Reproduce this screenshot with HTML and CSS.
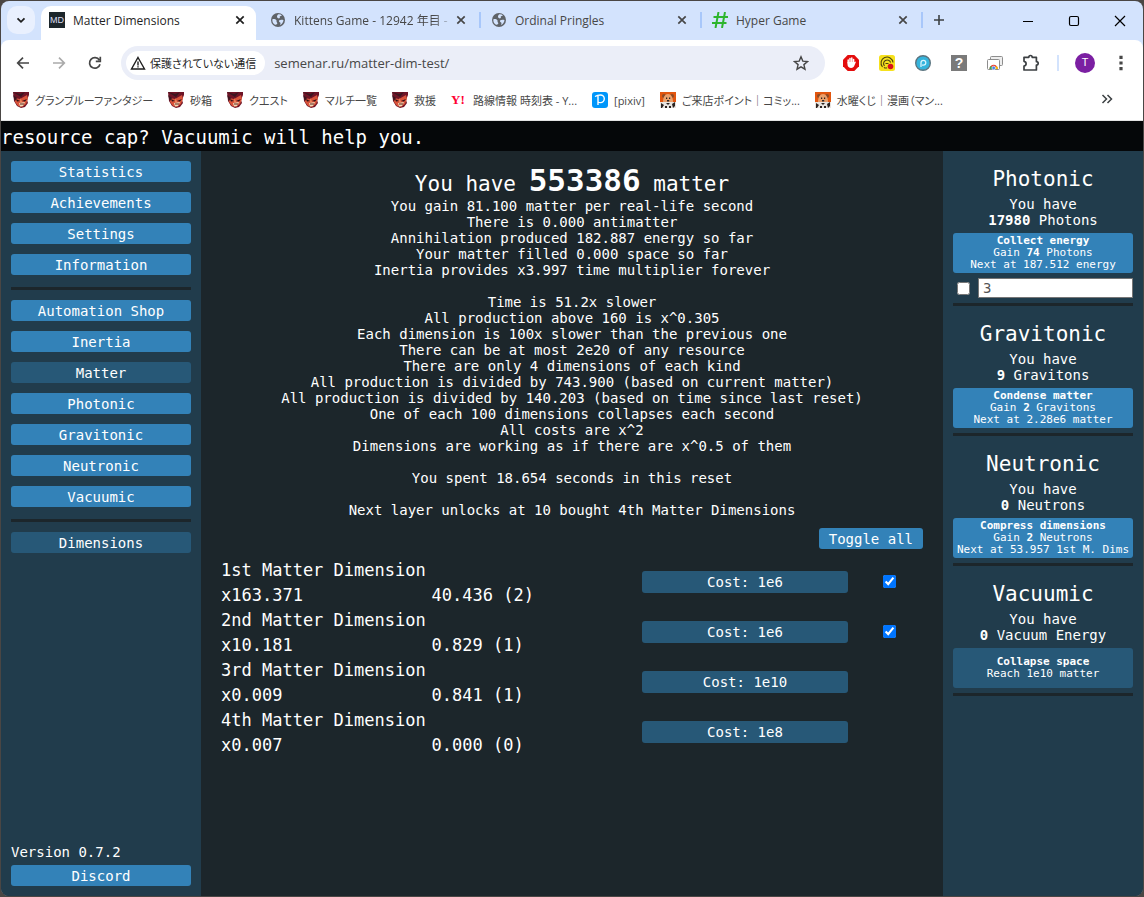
FILE: index.html
```html
<!DOCTYPE html>
<html lang="en">
<head>
    <meta charset="UTF-8">
    <meta name="viewport" content="width=device-width, initial-scale=1.0">
    <title>Matter Dimensions</title>
    <link rel="stylesheet" href="styles.css">
</head>
<body>
    <!-- Icons used more than once -->
    <svg class="icon-defs" aria-hidden="true">
        <symbol id="icon-close" viewBox="0 0 16 16">
            <path d="M4.3 4.3l7.4 7.4M11.7 4.3l-7.4 7.4" fill="none" stroke="currentColor" stroke-width="1.7"/>
        </symbol>
        <symbol id="icon-globe" viewBox="0 0 16 16">
            <circle cx="8" cy="8" r="7" fill="#5f6368"/>
            <path d="M2.4 7.2c1.8-.3 3.4.1 4 1 .5.8-.2 1.400.4 2 .5.500.8 1 .2 1.800-.5.6-1.200.9-2 .7-2-1-3-3.100-2.600-5.500zM8 2.400c1.500-.3 3 .1 4 1-.8.600-1.800.5-2.200 1.100-.4.7.600 1-.1 1.600-.8.6-2 .2-2.500-.5C6.800 4.700 7 3 8 2.400zM9 8.400c1-.8 2.900-.8 4.500-.4-.1 2.200-1.500 4.300-3.500 5.100.3-1 .8-1.700.2-2.500-.5-.6-1.800-1.400-1.200-2.200z" fill="#d3e3fd"/>
        </symbol>
        <symbol id="icon-face" viewBox="0 0 16 16">
            <path d="M0 0h16v3l-2 5 1 3-3 4-4 1-4-2-3-5z" fill="#6e1426"/>
            <path d="M2 6l5 1 7-4 1 4-2 5-4 3-4-1-3-4z" fill="#d9533a"/>
            <path d="M0 0l7 2 5-2-4 5zM0 3l4 3-2 3z" fill="#3c1620"/>
            <path d="M3 7l4 2-3 .6zM9 9l5-2-2 2.600z" fill="#2c1018"/>
            <path d="M6 11l6-1-2 4-3 .6z" fill="#f2d9b8"/>
            <path d="M7 12h4" stroke="#5a2018" stroke-width="1"/>
            <path d="M7.500 6l1.500 4-2 .5z" fill="#f08a5e"/>
        </symbol>
        <symbol id="icon-bear" viewBox="0 0 16 16">
            <path d="M0 0h16v10H0z" fill="#e2560f"/>
            <circle cx="4" cy="4" r="2" fill="#8a4a26"/>
            <circle cx="12" cy="4" r="2" fill="#8a4a26"/>
            <path d="M3 10c0-5 2-8 5-8s5 3 5 8z" fill="#e9a06c"/>
            <path d="M0 10h16v6H0z" fill="#e8e4e0"/>
            <path d="M6 5.500h1.200v1.500H6zM9 5.500h1.200v1.500H9zM7 8h2.200v1.500H7zM1 11l3 2-2 3H1zM6 11h4l-2 2zM12 12l3-2v4l-2 2zM5 14h2v2H5zM9 14h2v2H9z" fill="#2b2320"/>
        </symbol>
    </svg>

    <div class="window">
        <div class="tab-strip">
            <button class="tab-search" aria-label="Search tabs">
                <svg width="16" height="16" viewBox="0 0 16 16"><path d="M4.500 6.300L8 9.800l3.500-3.500" fill="none" stroke="#1f1f1f" stroke-width="1.800"/></svg>
            </button>
            <div class="tabs">
                <div class="tab tab-active">
                    <span class="favicon md-logo">MD</span>
                    <span class="tab-title">Matter Dimensions</span>
                    <button class="tab-close" aria-label="Close tab"><svg><use href="#icon-close"/></svg></button>
                </div>
                <div class="tab">
                    <svg class="favicon"><use href="#icon-globe"/></svg>
                    <span class="tab-title tab-title-fade">Kittens Game - 12942 年目 -</span>
                    <button class="tab-close" aria-label="Close tab"><svg><use href="#icon-close"/></svg></button>
                </div>
                <div class="tab tab-divided">
                    <svg class="favicon"><use href="#icon-globe"/></svg>
                    <span class="tab-title">Ordinal Pringles</span>
                    <button class="tab-close" aria-label="Close tab"><svg><use href="#icon-close"/></svg></button>
                </div>
                <div class="tab tab-divided">
                    <svg class="favicon" viewBox="0 0 16 16"><path d="M6.500 0L3.500 16M13 0l-3 16M1.500 5H16M0 11h14.500" fill="none" stroke="#2db52d" stroke-width="2"/></svg>
                    <span class="tab-title">Hyper Game</span>
                    <button class="tab-close" aria-label="Close tab"><svg><use href="#icon-close"/></svg></button>
                </div>
                <button class="new-tab tab-divided" aria-label="New tab">
                    <svg width="14" height="14" viewBox="0 0 14 14"><path d="M7 2v10M2 7h10" stroke="#3c4043" stroke-width="1.600"/></svg>
                </button>
            </div>
            <div class="window-controls">
                <button aria-label="Minimize"><svg width="12" height="12" viewBox="0 0 12 12"><path d="M1 6.500h10" stroke="#000"/></svg></button>
                <button aria-label="Maximize"><svg width="12" height="12" viewBox="0 0 12 12"><rect x="1.500" y="1.500" width="9" height="9" rx="1.500" fill="none" stroke="#000" stroke-width="1.200"/></svg></button>
                <button aria-label="Close"><svg width="12" height="12" viewBox="0 0 12 12"><path d="M1 1l10 10M11 1L1 11" stroke="#000" stroke-width="1.200"/></svg></button>
            </div>
        </div>

        <div class="toolbar">
            <button class="tool" aria-label="Back"><svg width="16" height="16" viewBox="0 0 16 16"><path d="M14 8H3M8 2.700L2.700 8 8 13.300" fill="none" stroke="#474747" stroke-width="1.700"/></svg></button>
            <button class="tool" aria-label="Forward" disabled><svg width="16" height="16" viewBox="0 0 16 16"><path d="M2 8h11M8 2.700L13.300 8 8 13.300" fill="none" stroke="#aaa" stroke-width="1.700"/></svg></button>
            <button class="tool" aria-label="Reload"><svg width="16" height="16" viewBox="0 0 16 16"><path d="M13 9.200A5.300 5.300 0 1 1 12.300 5M13.300 1.800v4.500H8.800" fill="none" stroke="#474747" stroke-width="1.700"/></svg></button>
            <div class="address-bar">
                <button class="security">
                    <svg width="16" height="14" viewBox="0 0 16 14"><path d="M8 1.500L14.500 13h-13z" fill="none" stroke="#1f1f1f" stroke-width="1.400"/><path d="M8 5.500v4M8 10.300v1.300" stroke="#1f1f1f" stroke-width="1.400"/></svg>
                    <span>保護されていない通信</span>
                </button>
                <input class="address" type="text" value="semenar.ru/matter-dim-test/" aria-label="Address">
                <button class="star" aria-label="Bookmark this page"><svg width="16" height="16" viewBox="0 0 16 16"><path d="M8 1.800l1.800 4.300 4.700.4-3.600 3.100 1.100 4.600L8 11.800l-4 2.400 1.100-4.600-3.600-3.100 4.700-.4z" fill="none" stroke="#474747" stroke-width="1.400"/></svg></button>
            </div>
            <div class="extensions">
                <button class="tool" aria-label="Ad blocker"><svg width="16" height="16" viewBox="0 0 16 16"><path d="M4.700 0h6.600L16 4.700v6.600L11.300 16H4.700L0 11.300V4.700z" fill="#e40d0d"/><path d="M5.200 8V5M7 8V3.500M8.800 8V3M10.600 8V4.500" stroke="#fff" stroke-width="1.500" stroke-linecap="round"/><path d="M4.500 7h6.800l1-.6.6.7-1.800 4.200C10.400 12.600 9.500 13 8.200 13 6 13 4.500 11.800 4.500 9.500z" fill="#fff"/></svg></button>
                <button class="tool" aria-label="Recorder"><svg width="16" height="16" viewBox="0 0 16 16"><rect width="16" height="16" rx="2.500" fill="#f6e11d"/><path d="M3.500 12A6 6 0 1 1 14 7.500M5.500 11A3.600 3.600 0 1 1 11.600 7.500M8 12.800c-1 .4-2.300.2-3-.5" fill="none" stroke="#4a4210" stroke-width="1.100"/><path d="M6.500 8.500h3" stroke="#4a4210"/><circle cx="11.500" cy="11.500" r="2.800" fill="#d8131b"/></svg></button>
                <button class="tool" aria-label="Powerful Pixiv"><svg width="16" height="16" viewBox="0 0 16 16"><circle cx="8" cy="8" r="7.300" fill="#35b4dc" stroke="#5c7580" stroke-width="1.400"/><path d="M6 12V7.800a2.400 2.400 0 1 1 2.400 2.400H7" fill="none" stroke="#d8f4fd" stroke-width="1.300"/></svg></button>
                <button class="tool" aria-label="Unknown extension"><span class="question">?</span></button>
                <button class="tool" aria-label="Screenshots"><svg width="16" height="16" viewBox="0 0 16 16"><rect x="3.500" y="1.500" width="12" height="9" rx="1" fill="#eee" stroke="#8d8d8d"/><rect x=".5" y="4.500" width="12" height="10" rx="1" fill="#fff" stroke="#8d8d8d"/><path d="M2.500 14a4.200 4.200 0 0 1 8.400 0z" fill="#e84335"/><path d="M2.500 14a4 4 0 0 1 1.200-3L6.700 14z" fill="#34a853"/><path d="M10.900 14a4 4 0 0 0-1.200-3l-3 3z" fill="#fbbc05"/><circle cx="6.700" cy="13" r="1.800" fill="#4285f4" stroke="#fff" stroke-width=".6"/></svg></button>
                <button class="tool" aria-label="Extensions"><svg width="18" height="18" viewBox="0 0 18 18"><path d="M2 3.300h4.800c0-2.400 3.400-2.400 3.400 0h4.200v4.300c2.400 0 2.400 3.400 0 3.400v5H2v-4c2.800-.6 2.800-4.100 0-4.700z" fill="none" stroke="#3c4043" stroke-width="1.700" stroke-linejoin="round"/></svg></button>
            </div>
            <span class="toolbar-divider"></span>
            <button class="tool" aria-label="Profile"><span class="avatar">T</span></button>
            <button class="tool" aria-label="Menu"><svg width="4" height="16" viewBox="0 0 4 16"><path d="M.4.700h3.200v3.200H.4zM.4 6.400h3.200v3.200H.4zM.4 12.100h3.200v3.200H.4z" fill="#474747"/></svg></button>
        </div>

        <nav class="bookmarks" lang="ja">
            <a class="bookmark" href="#"><svg><use href="#icon-face"/></svg>グランブルーファンタジー</a>
            <a class="bookmark" href="#"><svg><use href="#icon-face"/></svg>砂箱</a>
            <a class="bookmark" href="#"><svg><use href="#icon-face"/></svg>クエスト</a>
            <a class="bookmark" href="#"><svg><use href="#icon-face"/></svg>マルチ一覧</a>
            <a class="bookmark" href="#"><svg><use href="#icon-face"/></svg>救援</a>
            <a class="bookmark" href="#"><span class="yahoo">Y!</span>路線情報 時刻表 - Y...</a>
            <a class="bookmark" href="#"><svg viewBox="0 0 16 16"><rect width="16" height="16" rx="3" fill="#0096fa"/><path d="M3 4.500C5 3.300 7 3 8.500 3a3.800 3.800 0 0 1 0 7.600C7.500 10.600 6.500 10.300 6 10M6 4v9" fill="none" stroke="#fff" stroke-width="1.400"/></svg>[pixiv]</a>
            <a class="bookmark" href="#"><svg><use href="#icon-bear"/></svg>ご来店ポイント｜コミッ...</a>
            <a class="bookmark" href="#"><svg><use href="#icon-bear"/></svg>水曜くじ｜漫画（マン...</a>
            <button class="more-bookmarks" aria-label="More bookmarks"><svg width="12" height="12" viewBox="0 0 12 12"><path d="M1.500 2L5.500 6l-4 4M6.500 2l4 4-4 4" fill="none" stroke="#3c4043" stroke-width="1.500"/></svg></button>
        </nav>

        <div class="game">
            <div class="news">resource cap? Vacuumic will help you.</div>

            <div class="columns">
                <nav class="menu">
                    <button class="button">Statistics</button>
                    <button class="button">Achievements</button>
                    <button class="button">Settings</button>
                    <button class="button">Information</button>
                    <hr>
                    <button class="button">Automation Shop</button>
                    <button class="button">Inertia</button>
                    <button class="button button-off">Matter</button>
                    <button class="button">Photonic</button>
                    <button class="button">Gravitonic</button>
                    <button class="button">Neutronic</button>
                    <button class="button">Vacuumic</button>
                    <hr>
                    <button class="button button-off">Dimensions</button>
                    <div class="menu-footer">
                        <p>Version 0.7.2</p>
                        <button class="button">Discord</button>
                    </div>
                </nav>

                <main class="content">
                    <h1>You have <strong>553386</strong> matter</h1>
                    <div class="stats">
                        <p>You gain 81.100 matter per real-life second</p>
                        <p>There is 0.000 antimatter</p>
                        <p>Annihilation produced 182.887 energy so far</p>
                        <p>Your matter filled 0.000 space so far</p>
                        <p>Inertia provides x3.997 time multiplier forever</p>
                    </div>
                    <div class="stats">
                        <p>Time is 51.2x slower</p>
                        <p>All production above 160 is x^0.305</p>
                        <p>Each dimension is 100x slower than the previous one</p>
                        <p>There can be at most 2e20 of any resource</p>
                        <p>There are only 4 dimensions of each kind</p>
                        <p>All production is divided by 743.900 (based on current matter)</p>
                        <p>All production is divided by 140.203 (based on time since last reset)</p>
                        <p>One of each 100 dimensions collapses each second</p>
                        <p>All costs are x^2</p>
                        <p>Dimensions are working as if there are x^0.5 of them</p>
                    </div>
                    <div class="stats">
                        <p>You spent 18.654 seconds in this reset</p>
                    </div>
                    <div class="stats">
                        <p>Next layer unlocks at 10 bought 4th Matter Dimensions</p>
                    </div>

                    <div class="toggle-row">
                        <button class="button">Toggle all</button>
                    </div>

                    <table class="dimensions">
                        <colgroup>
                            <col class="col-wide">
                            <col class="col-wide">
                            <col class="col-wide">
                            <col>
                        </colgroup>
                        <tbody>
                            <tr>
                                <th colspan="2">1st Matter Dimension</th>
                                <td class="cost" rowspan="2"><button class="button button-off">Cost: 1e6</button></td>
                                <td class="auto" rowspan="2"><input type="checkbox" aria-label="Buy 1st Matter Dimension automatically" checked></td>
                            </tr>
                            <tr>
                                <td>x163.371</td>
                                <td>40.436 (2)</td>
                            </tr>
                            <tr>
                                <th colspan="2">2nd Matter Dimension</th>
                                <td class="cost" rowspan="2"><button class="button button-off">Cost: 1e6</button></td>
                                <td class="auto" rowspan="2"><input type="checkbox" aria-label="Buy 2nd Matter Dimension automatically" checked></td>
                            </tr>
                            <tr>
                                <td>x10.181</td>
                                <td>0.829 (1)</td>
                            </tr>
                            <tr>
                                <th colspan="2">3rd Matter Dimension</th>
                                <td class="cost" rowspan="2"><button class="button button-off">Cost: 1e10</button></td>
                                <td rowspan="2"></td>
                            </tr>
                            <tr>
                                <td>x0.009</td>
                                <td>0.841 (1)</td>
                            </tr>
                            <tr>
                                <th colspan="2">4th Matter Dimension</th>
                                <td class="cost" rowspan="2"><button class="button button-off">Cost: 1e8</button></td>
                                <td rowspan="2"></td>
                            </tr>
                            <tr>
                                <td>x0.007</td>
                                <td>0.000 (0)</td>
                            </tr>
                        </tbody>
                    </table>
                </main>

                <aside class="layers">
                    <section class="layer">
                        <h2>Photonic</h2>
                        <p>You have</p>
                        <p><strong>17980</strong> Photons</p>
                        <button class="button reset"><strong>Collect energy</strong><span>Gain <b>74</b> Photons</span><span>Next at 187.512 energy</span></button>
                        <div class="auto-reset">
                            <input type="checkbox" aria-label="Collect energy automatically">
                            <input class="amount" type="text" value="3" aria-label="Photons to collect at">
                        </div>
                        <hr>
                    </section>
                    <section class="layer">
                        <h2>Gravitonic</h2>
                        <p>You have</p>
                        <p><strong>9</strong> Gravitons</p>
                        <button class="button reset"><strong>Condense matter</strong><span>Gain <b>2</b> Gravitons</span><span>Next at 2.28e6 matter</span></button>
                        <hr>
                    </section>
                    <section class="layer">
                        <h2>Neutronic</h2>
                        <p>You have</p>
                        <p><strong>0</strong> Neutrons</p>
                        <button class="button reset"><strong>Compress dimensions</strong><span>Gain <b>2</b> Neutrons</span><span>Next at 53.957 1st M. Dims</span></button>
                        <hr>
                    </section>
                    <section class="layer">
                        <h2>Vacuumic</h2>
                        <p>You have</p>
                        <p><strong>0</strong> Vacuum Energy</p>
                        <button class="button button-off reset"><strong>Collapse space</strong><span>Reach 1e10 matter</span></button>
                        <hr>
                    </section>
                </aside>
            </div>
        </div>
    </div>
</body>
</html>
```
FILE: styles.css
```css
* {
    margin: 0;
    padding: 0;
    box-sizing: border-box;
}
body {
    min-height: 100vh;
    display: flex;
    padding: 1px;
    background-color: #4a4644;
    font-family: "Open Sans", "Noto Sans CJK JP", sans-serif;
    font-size: 12px;
    color: #474747;
}
button,
input {
    font: inherit;
    color: inherit;
    border: none;
}
button {
    background: none;
    cursor: pointer;
}
.icon-defs {
    display: none;
}
.window {
    flex: 1;
    min-width: 0;
    display: flex;
    flex-direction: column;
    overflow: hidden;
    border-radius: 8px;
    background-color: #d3e3fd;
}

/* Tabs */
.tab-strip {
    display: flex;
    height: 39px;
    padding-left: 6px;
}
.tab-search {
    display: flex;
    align-items: center;
    justify-content: center;
    width: 28px;
    height: 28px;
    margin: 5px 6px 0 0;
    border-radius: 10px;
    background-color: #e9f0fe;
}
.tabs {
    flex: 1;
    min-width: 0;
    display: flex;
    gap: 6px;
    padding-top: 5px;
}
.tab {
    flex: 0 1 215px;
    min-width: 0;
    height: 28px;
    display: flex;
    align-items: center;
    padding: 0 8px;
}
.tab-active {
    height: 34px;
    padding-bottom: 6px;
    border-radius: 10px 10px 0 0;
    background-color: #fff;
    color: #1f1f1f;
}
.tab-divided {
    position: relative;
}
.tab-divided::before {
    content: "";
    position: absolute;
    left: -4px;
    top: 6px;
    width: 2px;
    height: 16px;
    background-color: #a8c7fa;
}
.favicon {
    flex: none;
    width: 16px;
    height: 16px;
}
.md-logo {
    background-color: #1c262b;
    color: #dde;
    font: 9px/16px "Liberation Sans", sans-serif;
    text-align: center;
}
.tab-title {
    flex: 1;
    margin-left: 8px;
    overflow: hidden;
    white-space: nowrap;
}
.tab-title-fade {
    -webkit-mask-image: linear-gradient(to right, #000 88%, transparent);
    mask-image: linear-gradient(to right, #000 88%, transparent);
}
.tab-close,
.tab-close svg {
    display: block;
    width: 16px;
    height: 16px;
}
.new-tab {
    width: 28px;
    height: 28px;
}
.new-tab svg {
    display: block;
    margin: 0 auto;
}
.window-controls {
    display: flex;
}
.window-controls button {
    width: 46px;
    display: flex;
    align-items: center;
    justify-content: center;
}

/* Toolbar */
.toolbar {
    display: flex;
    align-items: center;
    height: 46px;
    padding: 0 4px;
    border-radius: 8px 8px 0 0;
    background-color: #fff;
}
.tool {
    flex: none;
    display: flex;
    align-items: center;
    justify-content: center;
    width: 36px;
    height: 34px;
}
.address-bar {
    flex: 1;
    min-width: 0;
    display: flex;
    align-items: center;
    height: 34px;
    margin: 0 8px;
    padding: 0 16px 0 5px;
    border-radius: 17px;
    background-color: #ebeef8;
}
.security {
    flex: none;
    display: flex;
    align-items: center;
    gap: 4px;
    height: 24px;
    padding: 0 9px 0 4px;
    border-radius: 12px;
    background-color: #fff;
    color: #1f1f1f;
    font-family: "Noto Sans CJK JP", sans-serif;
    font-size: 11px;
    font-feature-settings: "palt";
}
.address {
    flex: 1;
    min-width: 0;
    padding: 0 9px;
    background: none;
    font-size: 13px;
}
.star {
    display: flex;
}
.extensions {
    display: flex;
}
.question {
    width: 16px;
    height: 16px;
    background-color: #7a7a7a;
    color: #fff;
    font: bold 14px/16px "Liberation Sans", sans-serif;
    text-align: center;
}
.toolbar-divider {
    width: 2px;
    height: 16px;
    margin: 0 8px;
    background-color: #d3e3fd;
}
.avatar {
    width: 20px;
    height: 20px;
    border-radius: 50%;
    background-color: #7b1fa2;
    color: #fff;
    font: 11px/20px Roboto, sans-serif;
    text-align: center;
}

/* Bookmarks */
.bookmarks {
    display: flex;
    align-items: center;
    gap: 15px;
    height: 35px;
    padding: 0 30px 6px 12px;
    background-color: #fff;
    border-bottom: 1px solid #e3e3e3;
    font-size: 11px;
    font-feature-settings: "palt";
}
.bookmark {
    display: flex;
    align-items: center;
    gap: 6px;
    color: #474747;
    text-decoration: none;
    white-space: nowrap;
}
.bookmark svg {
    width: 16px;
    height: 16px;
}
.yahoo {
    width: 16px;
    color: #ff0033;
    font: bold 13px "Liberation Serif", serif;
}
.more-bookmarks {
    margin-left: auto;
}

/* Game */
.game {
    flex: 1;
    display: flex;
    flex-direction: column;
    background-color: #1c262b;
    color: #fff;
    font-family: "DejaVu Sans Mono", monospace;
    font-size: 14px;
    line-height: 16px;
}
.news {
    height: 30px;
    background-color: #050709;
    font-size: 19px;
    line-height: 33px;
    white-space: nowrap;
    overflow: hidden;
}
.columns {
    flex: 1;
    display: grid;
    grid-template-columns: 200px 1fr 200px;
}
.menu,
.layers {
    background-color: #213c4c;
}
.button {
    height: 21px;
    padding: 0 10px;
    border-radius: 3px;
    background-color: #3382b8;
    color: #fff;
}
.button-off {
    background-color: #275877;
}
hr {
    height: 3px;
    border: none;
    background-color: #1c262b;
}

.menu {
    display: flex;
    flex-direction: column;
    gap: 10px;
    padding: 10px;
}
.menu hr {
    margin-top: 2px;
}
.menu-footer {
    display: flex;
    flex-direction: column;
    gap: 5px;
    margin-top: auto;
}

.content {
    padding: 10px 20px;
}
.content h1 {
    padding-top: 4px;
    font-size: 21px;
    font-weight: normal;
    line-height: 28px;
    text-align: center;
}
.content h1 strong {
    font-size: 31px;
    line-height: 31px;
}
.stats {
    margin-bottom: 16px;
    text-align: center;
}
.toggle-row {
    display: flex;
    justify-content: flex-end;
    margin-top: -6px;
}
.dimensions {
    width: 100%;
    margin-top: 8px;
    table-layout: fixed;
    border-collapse: collapse;
    font-size: 17px;
}
.dimensions th,
.dimensions td {
    height: 25px;
    font-weight: normal;
    text-align: left;
}
.col-wide {
    width: 30%;
}
.dimensions .cost {
    padding-right: 5px;
    font-size: 14px;
}
.cost .button {
    width: 100%;
    height: 22px;
}
.dimensions .auto {
    padding-left: 4px;
    text-align: center;
}
input[type="checkbox"] {
    width: 13px;
    height: 13px;
}

.layers {
    padding: 0 10px;
    text-align: center;
}
.layer {
    display: flex;
    flex-direction: column;
    padding-top: 16px;
}
.layer h2 {
    margin-bottom: 4px;
    font-size: 21px;
    font-weight: normal;
    line-height: 25px;
}
.reset {
    display: flex;
    flex-direction: column;
    align-items: center;
    justify-content: center;
    height: 40px;
    margin: 5px 0;
    padding: 0;
    font-size: 11px;
    line-height: 12px;
    white-space: nowrap;
}
.auto-reset {
    display: flex;
    align-items: center;
    gap: 8px;
    margin-bottom: 5px;
    padding-left: 4px;
}
.amount {
    flex: 1;
    min-width: 0;
    height: 20px;
    padding: 0 4px;
    border: 1px solid #767676;
    background-color: #fff;
    color: #555;
}
```
